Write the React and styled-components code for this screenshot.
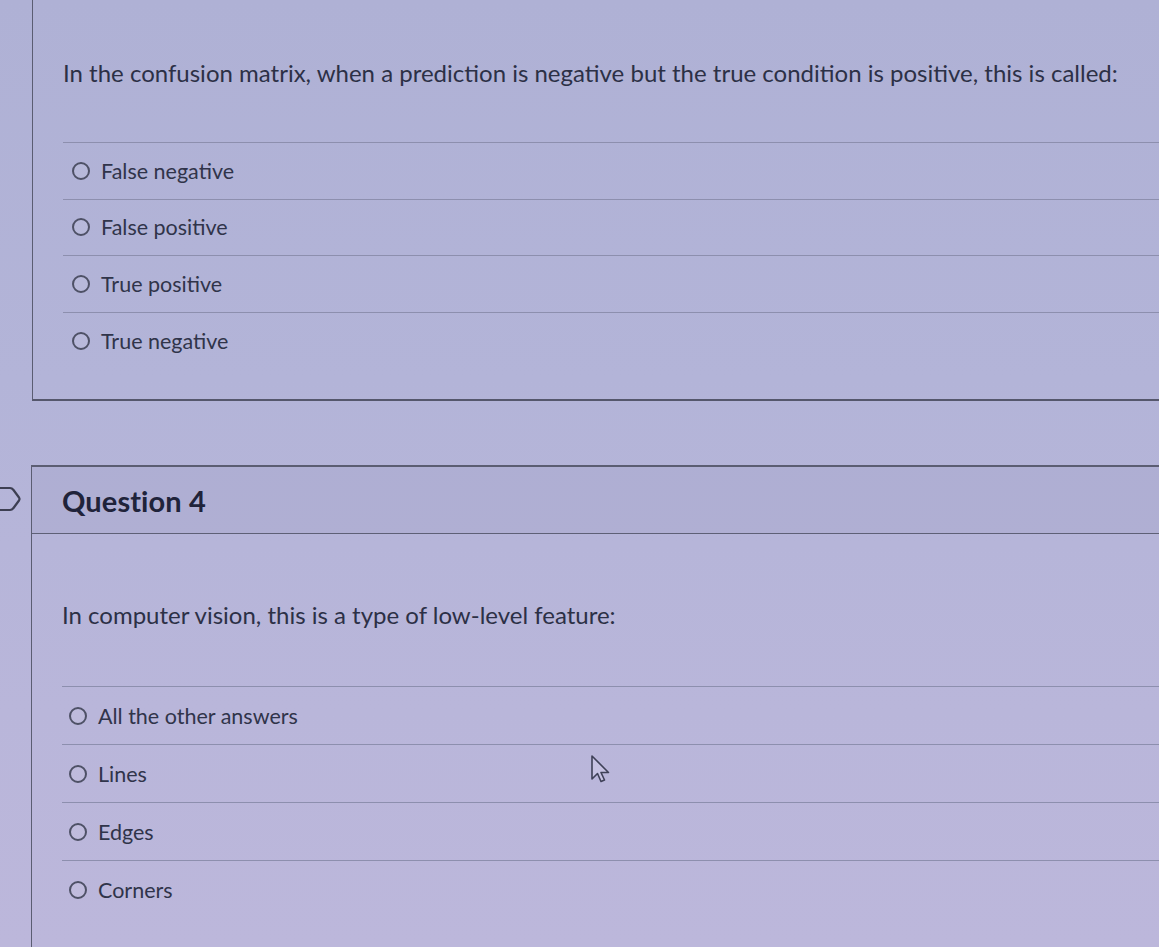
import React from "react";
import styled, { createGlobalStyle } from "styled-components";

const Global = createGlobalStyle`
  html, body {
    margin: 0;
    padding: 0;
    overflow: hidden;
    width: 1159px;
    height: 947px;
    background: linear-gradient(180deg, #afb1d5 0%, #b3b4d8 40%, #b9b6da 75%, #bcb7db 100%);
    font-family: Lato, "Open Sans", sans-serif;
    color: #2b2f45;
  }
`;

const Page = styled.div`
  position: relative;
  display: flex;
  flex-direction: column;
  gap: 64px;
  width: 1159px;
  height: 947px;
`;

const Block = styled.div`
  display: flex;
  align-items: stretch;
  flex: ${(p) => (p.$grow ? 1 : "none")};
`;

const Gutter = styled.div`
  width: ${(p) => p.$w}px;
  flex: none;
  display: flex;
  flex-direction: column;
  padding-top: ${(p) => p.$top || 0}px;
`;

const Card = styled.section`
  flex: 1;
  border-left: 1.5px solid #5b5d72;
  border-top: ${(p) => (p.$top ? "2px solid #5b5d72" : "none")};
  border-bottom: ${(p) => (p.$bottom ? "2px solid #55576c" : "none")};
  padding-bottom: ${(p) => p.$pb || 0}px;
`;

const Header = styled.div`
  height: 66px;
  display: flex;
  align-items: center;
  padding-left: 30px;
  border-bottom: 1.5px solid #5e6076;
  background: rgba(80, 80, 120, 0.05);
`;

const Title = styled.h2`
  margin: 0;
  font-size: 29px;
  font-weight: 700;
  color: #20233a;
  letter-spacing: 0.1px;
`;

const Body = styled.div`
  padding-left: ${(p) => p.$pl}px;
  padding-top: ${(p) => p.$pt}px;
`;

const QuestionText = styled.p`
  margin: 0;
  font-size: 24px;
  line-height: 28px;
  font-weight: 400;
  color: #2c3046;
  white-space: nowrap;
`;

const Answers = styled.ul`
  list-style: none;
  margin: ${(p) => p.$mt}px 0 0 0;
  padding: 0;
  border-top: 1.5px solid #8d8fae;
`;

const Answer = styled.li`
  height: ${(p) => p.$h}px;
  box-sizing: border-box;
  display: flex;
  align-items: center;
  gap: 11px;
  padding-left: ${(p) => p.$pl}px;
  border-bottom: ${(p) => (p.$last ? "none" : "1.5px solid #8d8fae")};
  font-size: 21.5px;
  color: #30344a;
`;

const Radio = styled.span`
  width: 14px;
  height: 14px;
  flex: none;
  border-radius: 50%;
  border: 2px solid #4e5166;
  background: rgba(255, 255, 255, 0.08);
`;

const Cursor = styled.svg`
  position: absolute;
  left: 590px;
  top: 754px;
`;

function Chevron() {
  return (
    <svg width="22" height="28" viewBox="0 0 22 28">
      <path
        d="M-2 3 H10 Q12 3 13.5 5 L19 12.5 Q20 14 19 15.5 L13.5 23 Q12 25 10 25 H-2"
        fill="none"
        stroke="#3d3f52"
        strokeWidth="2.2"
        strokeLinejoin="round"
      />
    </svg>
  );
}

const q1 = ["False negative", "False positive", "True positive", "True negative"];
const q2 = ["All the other answers", "Lines", "Edges", "Corners"];

export default function App() {
  return (
    <>
      <Global />
      <Page>
        <Block>
          <Gutter $w={32} />
          <Card $bottom $pb={30}>
            <Body $pl={30} $pt={59}>
              <QuestionText>
                In the confusion matrix, when a prediction is negative but the true condition is positive, this is called:
              </QuestionText>
              <Answers $mt={55}>
                {q1.map((a, i) => (
                  <Answer key={a} $h={56.5} $pl={9} $last={i === q1.length - 1}>
                    <Radio />
                    {a}
                  </Answer>
                ))}
              </Answers>
            </Body>
          </Card>
        </Block>
        <Block $grow>
          <Gutter $w={31} $top={20}>
            <Chevron />
          </Gutter>
          <Card $top>
            <Header>
              <Title>Question 4</Title>
            </Header>
            <Body $pl={30} $pt={67}>
              <QuestionText>In computer vision, this is a type of low-level feature:</QuestionText>
              <Answers $mt={57}>
                {q2.map((a, i) => (
                  <Answer key={a} $h={58} $pl={7} $last={i === q2.length - 1}>
                    <Radio />
                    {a}
                  </Answer>
                ))}
              </Answers>
            </Body>
          </Card>
        </Block>
        <Cursor width="22" height="30" viewBox="0 0 22 30">
          <path
            d="M2 2 L2 25 L7.5 19.5 L11 27.5 L14.5 26 L11 18.5 L18.5 18.5 Z"
            fill="#c6c2e2"
            stroke="#3f4158"
            strokeWidth="1.6"
            strokeLinejoin="round"
          />
        </Cursor>
      </Page>
    </>
  );
}
